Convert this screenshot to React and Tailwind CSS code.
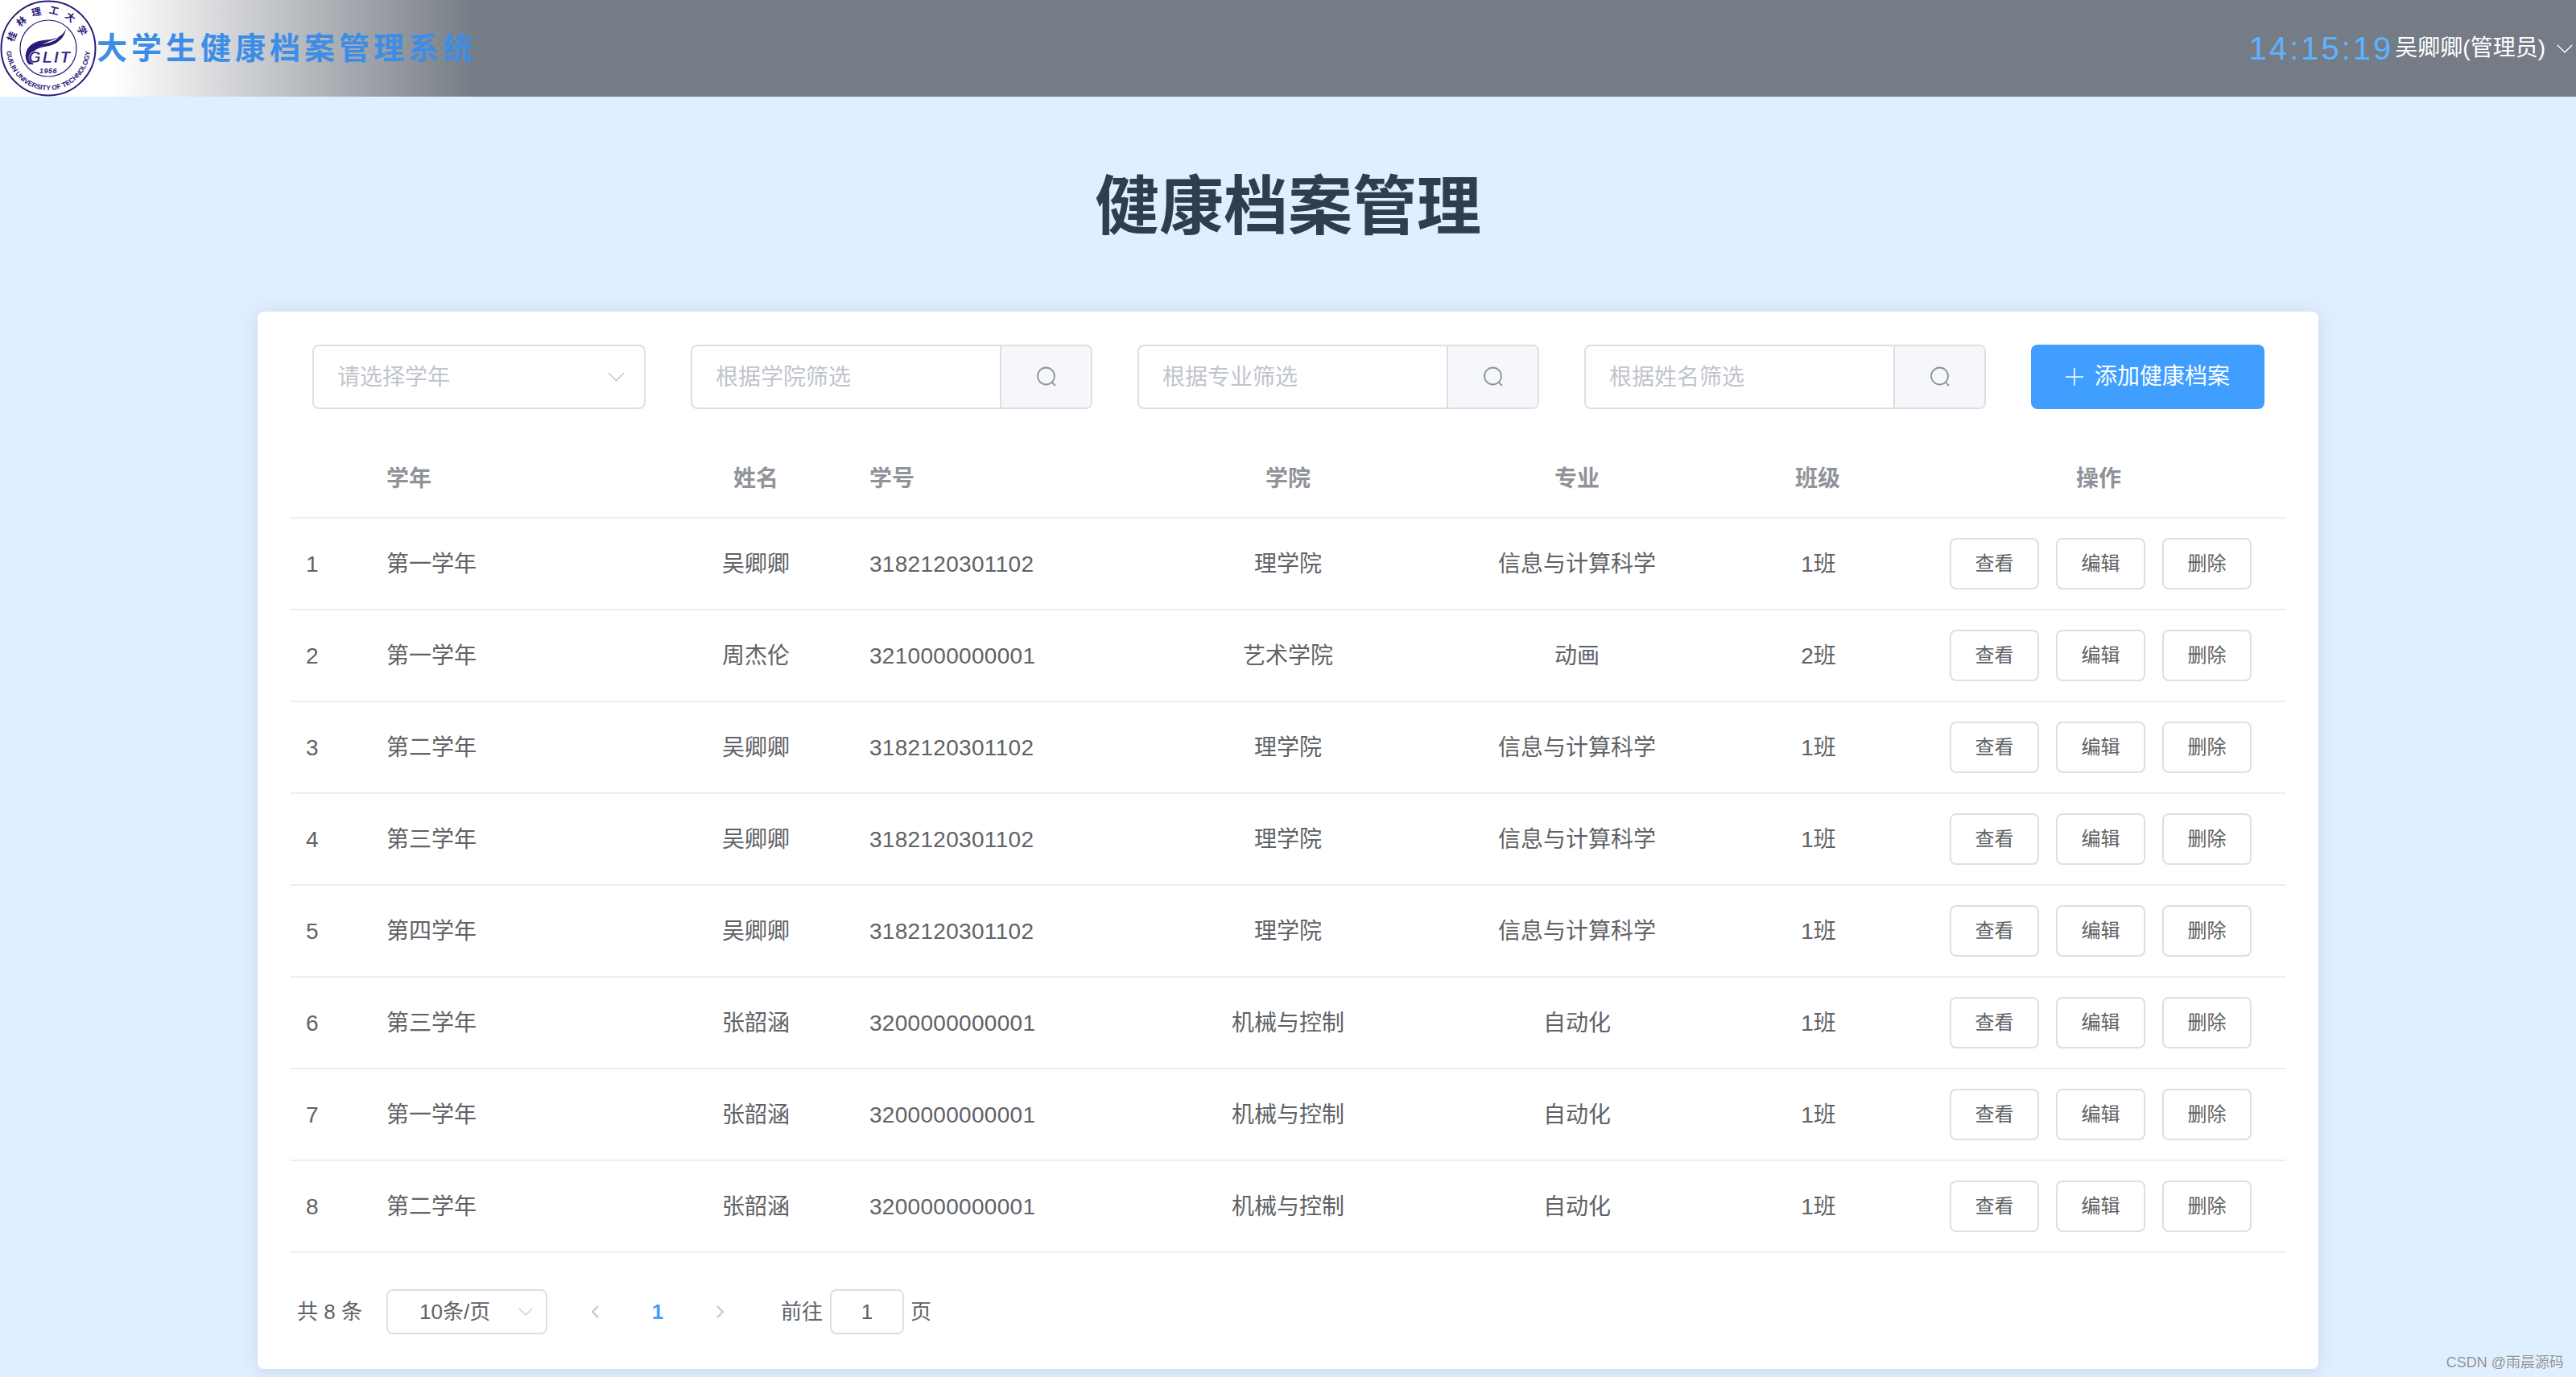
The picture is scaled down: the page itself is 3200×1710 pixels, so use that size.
const FONT = "font-['Liberation_Sans','Noto_Sans_CJK_SC',sans-serif]";

const ROWS = [
  ['第一学年', '吴卿卿', '3182120301102', '理学院', '信息与计算科学', '1班'],
  ['第一学年', '周杰伦', '3210000000001', '艺术学院', '动画', '2班'],
  ['第二学年', '吴卿卿', '3182120301102', '理学院', '信息与计算科学', '1班'],
  ['第三学年', '吴卿卿', '3182120301102', '理学院', '信息与计算科学', '1班'],
  ['第四学年', '吴卿卿', '3182120301102', '理学院', '信息与计算科学', '1班'],
  ['第三学年', '张韶涵', '3200000000001', '机械与控制', '自动化', '1班'],
  ['第一学年', '张韶涵', '3200000000001', '机械与控制', '自动化', '1班'],
  ['第二学年', '张韶涵', '3200000000001', '机械与控制', '自动化', '1班'],
];

const FILTERS = ['根据学院筛选', '根据专业筛选', '根据姓名筛选'];

// Wide shallow arrow used by the element-style selects
const ArrowDown = ({ className }) => (
  <svg viewBox="0 0 22 12" fill="none" stroke="currentColor" strokeWidth="1.5" className={className}>
    <path d="M1 1l10 10L21 1" />
  </svg>
);

const ArrowSide = ({ flip }) => (
  <svg viewBox="0 0 10 16" fill="none" stroke="#c0c4cc" strokeWidth="2" className={`w-[10px] h-[16px] ${flip ? 'rotate-180' : ''}`}>
    <path d="M9 1L2 8l7 7" />
  </svg>
);

const SearchIcon = () => (
  <svg viewBox="0 0 26 26" fill="none" stroke="#8f939a" strokeWidth="1.8" className="w-[26px] h-[26px]">
    <circle cx="12.5" cy="12" r="10.5" />
    <path d="M20 20l4 4" />
  </svg>
);

// School seal, text stays live on arcs
const Logo = () => (
  <svg viewBox="0 0 120 120" className="w-[120px] h-[120px] shrink-0">
    <defs>
      <path id="seal-top" d="M17.4 66A43 43 0 1 1 102.6 66" />
      <path id="seal-bottom" d="M8 60A52 52 0 0 0 112 60" />
    </defs>
    <circle cx="60" cy="60" r="58.5" fill="#fff" stroke="#2a1a78" strokeWidth="2" />
    <circle cx="60" cy="60" r="35" fill="#fff" stroke="#2a1a78" strokeWidth="1.2" />
    <text fill="#2a1a78" fontSize="12" fontWeight="700" fontFamily="'Noto Sans CJK SC',sans-serif" textAnchor="middle">
      <textPath href="#seal-top" startOffset="50%" letterSpacing="8">桂林理工大学</textPath>
    </text>
    <text fill="#2a1a78" fontSize="8.5" fontWeight="700" fontFamily="'Liberation Sans',sans-serif" textAnchor="middle">
      <textPath href="#seal-bottom" startOffset="50%" textLength="156">GUILIN UNIVERSITY OF TECHNOLOGY</textPath>
    </text>
    <path d="M82 35C78 47 66 49 54 50C42 51 33 58 32 67C31 72 33 77 36 80L42 80C37 75 37 69 42 64C48 57 60 59 69 54C77 49 81 43 82 35Z" fill="#2a1a78" />
    <path d="M74 44C70 52 60 53 52 55C60 51 69 50 74 44Z" fill="#fff" />
    <text x="61" y="78" fill="#2a1a78" fontSize="20" fontWeight="700" fontStyle="italic" fontFamily="'Liberation Sans',sans-serif" textAnchor="middle" stroke="#fff" strokeWidth="0.4" textLength="52">GLIT</text>
    <text x="60" y="91" fill="#2a1a78" fontSize="9" fontWeight="700" fontStyle="italic" fontFamily="'Liberation Sans',sans-serif" textAnchor="middle" letterSpacing="0.6">1956</text>
  </svg>
);

const Filter = ({ label }) => (
  <div className="w-[499px] h-[80px] flex border-2 border-[#dcdfe6] rounded-lg overflow-hidden">
    <div className="flex-1 flex items-center pl-[29px] pt-[2px] text-[28px] text-[#c0c4cc]">{label}</div>
    <div className="w-[113px] flex items-center justify-center bg-[#f5f7fa] border-l-2 border-[#dcdfe6]">
      <SearchIcon />
    </div>
  </div>
);

const ActionButton = ({ label }) => (
  <button className="w-[111px] h-[64px] border-2 border-[#dcdfe6] rounded-lg bg-white text-[24px] text-[#606266]">
    {label}
  </button>
);

export default function App() {
  return (
    <div className={`${FONT} w-full h-[1710px] overflow-hidden bg-[#dfefff] relative`}>
      <header className="h-[120px] flex items-center justify-between bg-[linear-gradient(90deg,#ffffff_140px,#767c85_590px)]">
        <div className="flex items-center">
          <Logo />
          <span className="text-[38px] font-bold tracking-[5px] text-[#3d8de6]">大学生健康档案管理系统</span>
        </div>
        <div className="flex items-center pr-[4px]">
          <span className="text-[40px] tracking-[3px] text-[#5cb3ff] leading-none">14:15:19</span>
          <span className="ml-[2px] text-[28px] text-white">吴卿卿(管理员)</span>
          <ArrowDown className="ml-[14px] w-[20px] h-[11px] text-white" />
        </div>
      </header>

      <h1 className="mt-[92px] text-center text-[80px] leading-[90px] font-bold text-[#2c3e50]">健康档案管理</h1>

      <section className="mt-[85px] mx-[320px] h-[1313px] bg-white rounded-lg shadow-[0_2px_24px_rgba(0,0,0,0.1)] pt-[41px] px-[40px]">
        {/* Filters */}
        <div className="ml-[28px] flex gap-[56px] items-center">
          <div className="w-[414px] h-[80px] flex items-center justify-between pl-[29px] pr-[24px] border-2 border-[#dcdfe6] rounded-lg text-[28px] text-[#c0c4cc]">
            <span className="pt-[2px]">请选择学年</span>
            <ArrowDown className="w-[21px] h-[12px] text-[#c0c4cc]" />
          </div>
          {FILTERS.map(label => <Filter key={label} label={label} />)}
          <button className="w-[290px] h-[80px] flex items-center justify-center gap-[14px] rounded-lg bg-[#409eff] text-[28px] text-white">
            <svg viewBox="0 0 22 22" fill="none" stroke="#fff" strokeWidth="1.6" className="w-[22px] h-[22px]">
              <path d="M11 0v22M0 11h22" />
            </svg>
            添加健康档案
          </button>
        </div>

        {/* Table */}
        <table className="mt-[37px] w-[2480px] table-fixed text-[28px] text-[#606266]">
          <colgroup>
            <col className="w-[100px]" />
            <col className="w-[358px]" />
            <col className="w-[242px]" />
            <col className="w-[364px]" />
            <col className="w-[352px]" />
            <col className="w-[366px]" />
            <col className="w-[232px]" />
            <col className="w-[466px]" />
          </colgroup>
          <thead>
            <tr className="h-[98px] border-b-2 border-[#ebeef5] text-[#909399]">
              <th></th>
              <th className="text-left pl-[20px] pt-[2px] font-bold">学年</th>
              <th className="text-center pt-[2px] font-bold">姓名</th>
              <th className="text-left pl-[20px] pt-[2px] font-bold">学号</th>
              <th className="text-center pt-[2px] font-bold">学院</th>
              <th className="text-center pt-[2px] font-bold">专业</th>
              <th className="text-center pt-[2px] font-bold">班级</th>
              <th className="text-center pt-[2px] font-bold">操作</th>
            </tr>
          </thead>
          <tbody>
            {ROWS.map((row, i) => (
              <tr key={i} className="h-[114px] border-b-2 border-[#ebeef5]">
                <td className="pl-[20px] pt-[2px]">{i + 1}</td>
                <td className="pl-[20px] pt-[2px]">{row[0]}</td>
                <td className="text-center pt-[2px]">{row[1]}</td>
                <td className="pl-[20px] pt-[2px] tracking-[0.3px]">{row[2]}</td>
                <td className="text-center pt-[2px]">{row[3]}</td>
                <td className="text-center pt-[2px]">{row[4]}</td>
                <td className="text-center pl-[2px] pt-[2px]">{row[5]}</td>
                <td>
                  <div className="flex justify-center gap-[21px] pl-[5px]">
                    <ActionButton label="查看" />
                    <ActionButton label="编辑" />
                    <ActionButton label="删除" />
                  </div>
                </td>
              </tr>
            ))}
          </tbody>
        </table>

        {/* Pagination */}
        <div className="mt-[45px] ml-[9px] flex items-center h-[56px] text-[26px] text-[#606266]">
          <span className="w-[111px] whitespace-pre">共 8 条</span>
          <div className="w-[200px] h-[56px] flex items-center justify-between pl-[39px] pr-[16px] border-2 border-[#dcdfe6] rounded-lg">
            10条/页
            <ArrowDown className="w-[18px] h-[10px] text-[#c0c4cc]" />
          </div>
          <div className="ml-[54px] w-[166px] flex items-center justify-between">
            <ArrowSide />
            <span className="font-bold text-[#409eff]">1</span>
            <ArrowSide flip />
          </div>
          <span className="ml-[70px]">前往</span>
          <div className="ml-[9px] w-[92px] h-[56px] flex items-center justify-center border-2 border-[#dcdfe6] rounded-lg">1</div>
          <span className="ml-[8px]">页</span>
        </div>
      </section>

      <span className="absolute right-[15px] bottom-[8px] text-[18px] leading-[20px] text-[#8d9299] [text-shadow:1px_1px_1px_rgba(255,255,255,0.8)]">CSDN @雨晨源码</span>
    </div>
  );
}
